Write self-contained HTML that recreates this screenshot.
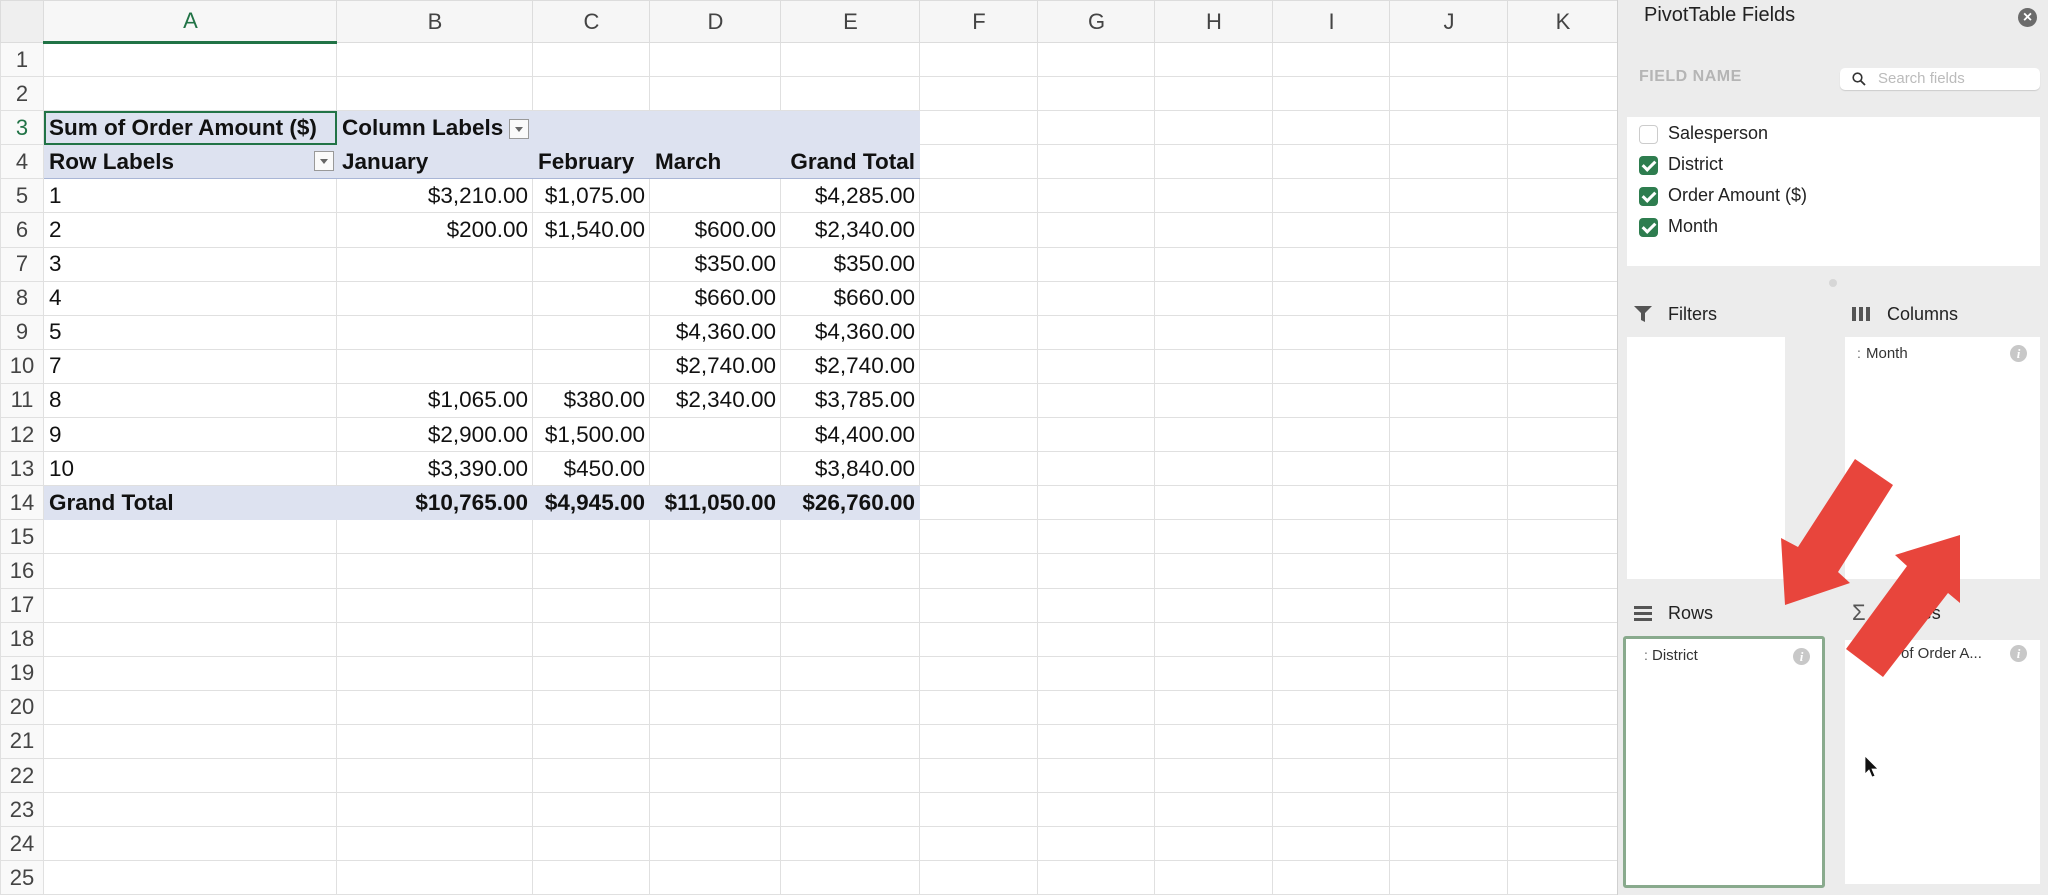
<!DOCTYPE html>
<html><head><meta charset="utf-8"><style>
*{margin:0;padding:0;box-sizing:border-box}
body{width:2048px;height:895px;overflow:hidden;background:#fff;font-family:"Liberation Sans",Arial,sans-serif;position:relative}
table{border-collapse:collapse;table-layout:fixed;position:absolute;left:0;top:0;width:1617px}
td{border:1px solid #e0e0e0;height:34.1px;font-size:22.5px;color:#111;padding:0 4px 0 5px;white-space:nowrap;overflow:hidden;position:relative}
tr.h td{height:42px;background:#f6f6f6;text-align:center;font-size:22px;color:#444;border-color:#dcdcdc}
td.rn{background:#f9f9f9;color:#444;text-align:center;padding:0;font-size:22px}
td.r{text-align:right}
td.b{font-weight:bold}
.bl td.p{background:#dde2f0;border-color:#dde2f0}
.bl td.p.bb{border-bottom:1px solid #a9b6d6}
.gt td.p{background:#dde2f0;border-color:#dde2f0;border-top:1px solid #a9b6d6;font-weight:bold}
.dd{display:inline-block;width:20px;height:20px;border:1px solid #999;background:#fafafa;vertical-align:middle;position:relative;margin-left:6px}
.dd:after{content:"";position:absolute;left:5px;top:7px;border-left:4px solid transparent;border-right:4px solid transparent;border-top:5px solid #666}
#panel{position:absolute;left:1617px;top:0;width:431px;height:895px;background:#ececec;border-left:1px solid #d0d0d0}
.a{position:absolute}
.box{position:absolute;background:#fff}
.lbl{font-size:18px;color:#222}
.cb{position:absolute;width:19px;height:19px;border-radius:4px;background:#2e7d4f}
.cb:after{content:"";position:absolute;left:6px;top:2px;width:5px;height:10px;border:solid #fff;border-width:0 3px 3px 0;transform:rotate(45deg)}
.info{position:absolute;width:17px;height:17px;border-radius:50%;background:#c8c8c8;color:#fff;font-size:13px;font-style:italic;font-weight:bold;text-align:center;line-height:17px;font-family:"Liberation Serif",serif}
</style></head><body>
<table>
<colgroup><col style="width:43px"><col style="width:293px"><col style="width:196px"><col style="width:117px"><col style="width:131px"><col style="width:139px"><col style="width:118px"><col style="width:117px"><col style="width:118px"><col style="width:117px"><col style="width:118px"><col style="width:110px"></colgroup>
<tr class="h"><td style="background:#efefef"></td><td style="color:#217346;border-bottom:3px solid #217346;background:#f7f7f7">A</td><td>B</td><td>C</td><td>D</td><td>E</td><td>F</td><td>G</td><td>H</td><td>I</td><td>J</td><td>K</td></tr>
<tr><td class="rn">1</td><td></td><td></td><td></td><td></td><td></td><td></td><td></td><td></td><td></td><td></td><td></td></tr>
<tr><td class="rn">2</td><td></td><td></td><td></td><td></td><td></td><td></td><td></td><td></td><td></td><td></td><td></td></tr>
<tr class="bl"><td class="rn" style="color:#217346">3</td><td class="p b" style="outline:2px solid #217346;outline-offset:-2px">Sum of Order Amount ($)</td><td class="p b">Column Labels<span class="dd"></span></td><td class="p"></td><td class="p"></td><td class="p"></td><td></td><td></td><td></td><td></td><td></td><td></td></tr>
<tr class="bl"><td class="rn">4</td><td class="p b bb">Row Labels<span class="dd" style="position:absolute;right:2px;top:6px"></span></td><td class="p b bb">January</td><td class="p b bb">February</td><td class="p b bb">March</td><td class="p b bb r">Grand Total</td><td></td><td></td><td></td><td></td><td></td><td></td></tr>
<tr><td class="rn">5</td><td>1</td><td class="r">$3,210.00</td><td class="r">$1,075.00</td><td class="r"></td><td class="r">$4,285.00</td><td></td><td></td><td></td><td></td><td></td><td></td></tr>
<tr><td class="rn">6</td><td>2</td><td class="r">$200.00</td><td class="r">$1,540.00</td><td class="r">$600.00</td><td class="r">$2,340.00</td><td></td><td></td><td></td><td></td><td></td><td></td></tr>
<tr><td class="rn">7</td><td>3</td><td class="r"></td><td class="r"></td><td class="r">$350.00</td><td class="r">$350.00</td><td></td><td></td><td></td><td></td><td></td><td></td></tr>
<tr><td class="rn">8</td><td>4</td><td class="r"></td><td class="r"></td><td class="r">$660.00</td><td class="r">$660.00</td><td></td><td></td><td></td><td></td><td></td><td></td></tr>
<tr><td class="rn">9</td><td>5</td><td class="r"></td><td class="r"></td><td class="r">$4,360.00</td><td class="r">$4,360.00</td><td></td><td></td><td></td><td></td><td></td><td></td></tr>
<tr><td class="rn">10</td><td>7</td><td class="r"></td><td class="r"></td><td class="r">$2,740.00</td><td class="r">$2,740.00</td><td></td><td></td><td></td><td></td><td></td><td></td></tr>
<tr><td class="rn">11</td><td>8</td><td class="r">$1,065.00</td><td class="r">$380.00</td><td class="r">$2,340.00</td><td class="r">$3,785.00</td><td></td><td></td><td></td><td></td><td></td><td></td></tr>
<tr><td class="rn">12</td><td>9</td><td class="r">$2,900.00</td><td class="r">$1,500.00</td><td class="r"></td><td class="r">$4,400.00</td><td></td><td></td><td></td><td></td><td></td><td></td></tr>
<tr><td class="rn">13</td><td>10</td><td class="r">$3,390.00</td><td class="r">$450.00</td><td class="r"></td><td class="r">$3,840.00</td><td></td><td></td><td></td><td></td><td></td><td></td></tr>
<tr class="gt"><td class="rn">14</td><td class="p">Grand Total</td><td class="p r">$10,765.00</td><td class="p r">$4,945.00</td><td class="p r">$11,050.00</td><td class="p r">$26,760.00</td><td></td><td></td><td></td><td></td><td></td><td></td></tr>
<tr><td class="rn">15</td><td></td><td></td><td></td><td></td><td></td><td></td><td></td><td></td><td></td><td></td><td></td></tr>
<tr><td class="rn">16</td><td></td><td></td><td></td><td></td><td></td><td></td><td></td><td></td><td></td><td></td><td></td></tr>
<tr><td class="rn">17</td><td></td><td></td><td></td><td></td><td></td><td></td><td></td><td></td><td></td><td></td><td></td></tr>
<tr><td class="rn">18</td><td></td><td></td><td></td><td></td><td></td><td></td><td></td><td></td><td></td><td></td><td></td></tr>
<tr><td class="rn">19</td><td></td><td></td><td></td><td></td><td></td><td></td><td></td><td></td><td></td><td></td><td></td></tr>
<tr><td class="rn">20</td><td></td><td></td><td></td><td></td><td></td><td></td><td></td><td></td><td></td><td></td><td></td></tr>
<tr><td class="rn">21</td><td></td><td></td><td></td><td></td><td></td><td></td><td></td><td></td><td></td><td></td><td></td></tr>
<tr><td class="rn">22</td><td></td><td></td><td></td><td></td><td></td><td></td><td></td><td></td><td></td><td></td><td></td></tr>
<tr><td class="rn">23</td><td></td><td></td><td></td><td></td><td></td><td></td><td></td><td></td><td></td><td></td><td></td></tr>
<tr><td class="rn">24</td><td></td><td></td><td></td><td></td><td></td><td></td><td></td><td></td><td></td><td></td><td></td></tr>
<tr><td class="rn">25</td><td></td><td></td><td></td><td></td><td></td><td></td><td></td><td></td><td></td><td></td><td></td></tr>
</table>

<div id="panel">
<div class="a" style="left:26px;top:4px;font-size:20px;color:#222">PivotTable Fields</div>
<div class="a" style="left:400px;top:8px;width:19px;height:19px;border-radius:50%;background:#6b6b6b;color:#fff;font-size:16px;line-height:19px;text-align:center;font-weight:bold">×</div>
<div class="a" style="left:21px;top:68px;font-size:16px;font-weight:bold;color:#b5b5b5;letter-spacing:0.5px">FIELD NAME</div>
<div class="box" style="left:222px;top:68px;width:200px;height:22px;border-radius:5px;box-shadow:0 1px 1px #ccc">
 <svg class="a" style="left:12px;top:4px" width="14" height="14" viewBox="0 0 14 14"><circle cx="5.5" cy="5.5" r="4.3" fill="none" stroke="#333" stroke-width="1.6"/><path d="M8.7 8.7L13 13" stroke="#333" stroke-width="1.8"/></svg>
 <div class="a" style="left:38px;top:2px;font-size:15px;color:#bbb">Search fields</div></div>
<div class="box" style="left:9px;top:117px;width:413px;height:149px">
 <div class="a" style="left:12px;top:8px;width:19px;height:19px;border-radius:4px;border:1px solid #ccc"></div>
 <div class="a lbl" style="left:41px;top:6px">Salesperson</div>
 <div class="cb" style="left:12px;top:39px"></div><div class="a lbl" style="left:41px;top:37px">District</div>
 <div class="cb" style="left:12px;top:70px"></div><div class="a lbl" style="left:41px;top:68px">Order Amount ($)</div>
 <div class="cb" style="left:12px;top:101px"></div><div class="a lbl" style="left:41px;top:99px">Month</div>
</div>
<div class="a" style="left:211px;top:279px;width:8px;height:8px;border-radius:50%;background:#d6d6d6"></div>
<svg class="a" style="left:15px;top:305px" width="20" height="18" viewBox="0 0 20 18"><path d="M1 1H19L12 8V17L8 15V8Z" fill="#555"/></svg>
<div class="a lbl" style="left:50px;top:304px">Filters</div>
<div class="a" style="left:234px;top:307px;width:4px;height:14px;background:#555;box-shadow:7px 0 #555,14px 0 #555"></div>
<div class="a lbl" style="left:269px;top:304px">Columns</div>
<div class="box" style="left:9px;top:337px;width:158px;height:242px"></div>
<div class="box" style="left:227px;top:337px;width:195px;height:242px">
 <div class="a" style="left:12px;top:8px;font-size:14px;color:#666">:</div>
 <div class="a" style="left:21px;top:8px;font-size:15px;color:#333">Month</div>
 <div class="info" style="left:165px;top:8px">i</div></div>
<div class="a" style="left:16px;top:606px;width:18px;height:3px;background:#555;box-shadow:0 6px #555,0 12px #555"></div>
<div class="a lbl" style="left:50px;top:603px">Rows</div>
<div class="a" style="left:234px;top:600px;font-size:22px;color:#555">Σ</div>
<div class="a lbl" style="left:269px;top:603px">Values</div>
<div class="box" style="left:5px;top:636px;width:202px;height:252px;border:3px solid #89aa8d;border-radius:3px">
 <div class="a" style="left:18px;top:8px;font-size:14px;color:#666">:</div>
 <div class="a" style="left:26px;top:8px;font-size:15px;color:#333">District</div>
 <div class="info" style="left:167px;top:9px">i</div></div>
<div class="box" style="left:227px;top:640px;width:195px;height:244px">
 <div class="a" style="left:21px;top:5px;font-size:15px;color:#333">Sum of Order A...</div>
 <div class="info" style="left:165px;top:5px">i</div></div>
<svg class="a" style="left:0;top:0" width="431" height="895" viewBox="1617 0 431 895">
 <polygon points="1854,459 1892,485 1837,572 1849,583 1784,605 1780,538 1797,547" fill="#e8453c"/>
 <polygon points="1882,677 1845,649 1906,566 1894,555 1959,535 1959,603 1947,593" fill="#e8453c"/>
 <path d="M1864,756 L1864,774 L1868,770 L1871,777 L1874,776 L1871,769 L1877,769 Z" fill="#111" stroke="#fff" stroke-width="0.8"/>
</svg>
</div>
</body></html>
